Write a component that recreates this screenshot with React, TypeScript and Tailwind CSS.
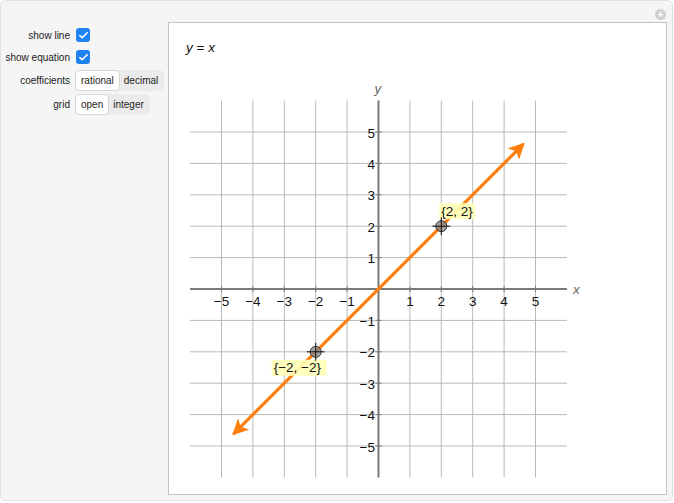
import { Check } from 'lucide-react'

const U = 31.4
const OX = 209.5
const OY = 266
const X = (v: number) => OX + v * U
const Y = (v: number) => OY - v * U
const ticks = [-5, -4, -3, -2, -1, 1, 2, 3, 4, 5]
const all = [-5, -4, -3, -2, -1, 0, 1, 2, 3, 4, 5]
const lbl = (n: number) => (n < 0 ? `\u2212${-n}` : `${n}`)

function Checkbox() {
  return (
    <div className="w-[14px] h-[14px] rounded-[3px] bg-[#1e82f0] flex items-center justify-center">
      <Check className="w-[11px] h-[11px] text-white" strokeWidth={3.5} />
    </div>
  )
}

function Segmented({ options, active }: { options: string[]; active: number }) {
  return (
    <div className="flex items-center h-[21px] rounded-[5px] bg-[#ebebeb] p-[1px]">
      {options.map((o, i) => (
        <div
          key={o}
          className={`h-[19px] px-[5px] flex items-center rounded-[4px] text-[10px] text-[#222] ${i === active ? 'bg-white shadow-[0_0_0_1px_#d6d6d6]' : ''}`}
        >
          {o}
        </div>
      ))}
    </div>
  )
}

function Point({ x, y }: { x: number; y: number }) {
  const cx = X(x)
  const cy = Y(y)
  return (
    <g>
      <circle cx={cx} cy={cy} r={5.5} fill="#8a8a8a" fillOpacity={0.8} stroke="#333" strokeWidth={1} />
      <line x1={cx - 9} y1={cy} x2={cx + 9} y2={cy} stroke="#111" strokeWidth={1} />
      <line x1={cx} y1={cy - 9} x2={cx} y2={cy + 9} stroke="#111" strokeWidth={1} />
    </g>
  )
}

function Plot() {
  const a = 4.62
  const x1 = X(-a), y1 = Y(-a), x2 = X(a), y2 = Y(a)
  return (
    <svg width={497} height={471} className="block" style={{ fontFamily: '"Liberation Sans", Arial, sans-serif' }}>
      <text x={17} y={29} fontSize={13.5} fill="#111" fontStyle="italic">
        y <tspan fontStyle="normal">=</tspan> x
      </text>
      {/* grid */}
      {all.map(v => (
        <g key={v}>
          <line x1={X(v)} y1={Y(6)} x2={X(v)} y2={Y(-6)} stroke="#b8b8b8" strokeWidth={1} />
          <line x1={X(-6)} y1={Y(v)} x2={X(6)} y2={Y(v)} stroke="#b8b8b8" strokeWidth={1} />
        </g>
      ))}
      {/* axes */}
      <line x1={X(-6)} y1={OY} x2={X(6)} y2={OY} stroke="#7a7a7a" strokeWidth={2} />
      <line x1={OX} y1={Y(6)} x2={OX} y2={Y(-6)} stroke="#7a7a7a" strokeWidth={2} />
      {ticks.map(v => (
        <g key={v}>
          <line x1={X(v)} y1={OY - 3} x2={X(v)} y2={OY + 3} stroke="#7a7a7a" strokeWidth={1} />
          <line x1={OX - 3} y1={Y(v)} x2={OX + 3} y2={Y(v)} stroke="#7a7a7a" strokeWidth={1} />
          <text x={X(v)} y={OY + 17} fontSize={13.5} fill="#111" textAnchor="middle">
            {lbl(v)}
          </text>
          <text x={OX - 3.5} y={Y(v) + 5.5} fontSize={13.5} fill="#111" textAnchor="end">
            {lbl(v)}
          </text>
        </g>
      ))}
      <text x={X(6) + 6} y={OY + 5} fontSize={13.5} fill="#666" fontStyle="italic">x</text>
      <text x={OX - 4} y={Y(6) - 8} fontSize={13.5} fill="#666" fontStyle="italic">y</text>
      {/* line */}
      <defs>
        <marker id="ah" viewBox="0 0 10 10" refX={9} refY={5} markerWidth={5} markerHeight={5} orient="auto-start-reverse">
          <path d="M0,0 L10,5 L0,10 L2.5,5 z" fill="#ff7f0e" />
        </marker>
      </defs>
      <line x1={x1} y1={y1} x2={x2} y2={y2} stroke="#ff7f0e" strokeWidth={3.2} markerStart="url(#ah)" markerEnd="url(#ah)" />
      {/* labels */}
      <rect x={X(2) - 2} y={Y(2) - 23} width={36} height={16} fill="#ffffb8" fillOpacity={0.9} />
      <text x={X(2)} y={Y(2) - 10.5} fontSize={13.5} fill="#111">{'{2, 2}'}</text>
      <rect x={X(-2) - 44} y={Y(-2) + 8} width={55} height={16} fill="#ffffb8" fillOpacity={0.9} />
      <text x={X(-2) - 42} y={Y(-2) + 20.5} fontSize={13.5} fill="#111">{'{\u22122, \u22122}'}</text>
      <Point x={2} y={2} />
      <Point x={-2} y={-2} />
    </svg>
  )
}

export default function App() {
  return (
    <div className="w-[674px] h-[503px] bg-white" style={{ fontFamily: '"Liberation Sans", Arial, sans-serif' }}>
      <div className="relative w-[673px] h-[501px] bg-[#f5f5f5] border border-[#e2e2e2] rounded-[5px] flex">
        <div className="w-[167px] pt-[26px] flex flex-col">
          <div className="flex items-center h-[16px] gap-[6px]">
            <span className="w-[69px] text-right text-[10px] text-[#222]">show line</span>
            <Checkbox />
          </div>
          <div className="flex items-center h-[16px] gap-[6px] mt-[6px]">
            <span className="w-[69px] text-right text-[10px] text-[#222]">show equation</span>
            <Checkbox />
          </div>
          <div className="flex items-center gap-[5px] mt-[5px]">
            <span className="w-[69px] text-right text-[10px] text-[#222]">coefficients</span>
            <Segmented options={['rational', 'decimal']} active={0} />
          </div>
          <div className="flex items-center gap-[5px] mt-[3px]">
            <span className="w-[69px] text-right text-[10px] text-[#222]">grid</span>
            <Segmented options={['open', 'integer']} active={0} />
          </div>
        </div>
        <div className="mt-[21px] w-[499px] h-[473px] bg-white border border-[#c4c4c4]">
          <Plot />
        </div>
        <div className="absolute right-[6px] top-[8px] w-[11px] h-[11px] rounded-full bg-[#d0d0d0] flex items-center justify-center">
          <span className="text-white text-[10px] leading-none font-bold">+</span>
        </div>
      </div>
    </div>
  )
}
